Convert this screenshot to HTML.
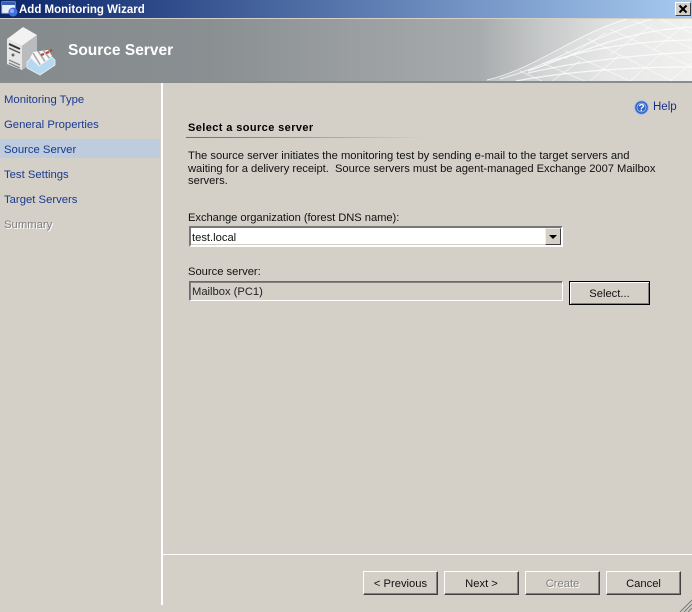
<!DOCTYPE html>
<html><head><meta charset="utf-8">
<style>
html,body{margin:0;padding:0}
body{width:692px;height:612px;overflow:hidden;position:relative;background:#d4d0c8;font-family:"Liberation Sans",sans-serif;font-size:11.2px;color:#000}
.a{position:absolute;white-space:nowrap}
.n{left:4px;color:#1a3a8c;height:14px;line-height:14px;font-size:11.3px}
.t{left:188px;height:14px;line-height:14px;color:#111}
.b{position:absolute;box-sizing:border-box;background:#d4d0c8;border:1px solid;border-color:#fff #404040 #404040 #fff;box-shadow:inset -1px -1px 0 #808080;text-align:center;line-height:24px;height:24px;width:75px;top:571px;color:#111}
</style></head><body>
<div class="a" style="left:0;top:0;width:692px;height:18px;background:linear-gradient(90deg,#0a246a,#a6caf0)"></div>
<svg class="a" style="left:1px;top:1px" width="18" height="16" viewBox="0 0 18 16"><rect x="1" y="1" width="13" height="11" fill="#e8eef8" stroke="#c4d2e8"/><rect x="1" y="1" width="13" height="3" fill="#3a5fb0"/><circle cx="12" cy="11" r="4.5" fill="#3f6fe0"/><circle cx="11" cy="10" r="2" fill="#8fb0f5"/></svg>
<div class="a" style="left:19px;top:3px;color:#fff;font-weight:bold;font-size:11.5px;line-height:14px">Add Monitoring Wizard</div>
<div class="a" style="left:675px;top:2px;box-sizing:border-box;width:16px;height:14px;background:#d4d0c8;border:1px solid;border-color:#fff #404040 #404040 #fff"><svg style="position:absolute;left:2px;top:1px" width="10" height="10" viewBox="0 0 10 10"><path d="M1.5 1.5L8.5 8.5M8.5 1.5L1.5 8.5" stroke="#000" stroke-width="2"/></svg></div>

<div class="a" style="left:0;top:18px;width:692px;height:1px;background:#d4d0c8"></div>
<div class="a" style="left:0;top:19px;width:692px;height:62px;background:linear-gradient(90deg,#858a8d 0,#8a8f92 30%,#a8abad 69%,#c8cacb 79%,#e0e1e0 88%,#ececea 100%)"></div>
<svg class="a" style="left:480px;top:19px" width="212" height="62" viewBox="0 0 212 62" fill="none" stroke="#fff" stroke-opacity=".75">
<path d="M5 62C60 50 95 15 147 0H212V62Z" fill="#fff" fill-opacity=".22" stroke="none"/>
<path d="M7 61C55 50 95 15 147 0" stroke-width="1"/>
<path d="M20 60C75 45 110 18 172 0" stroke-width="1"/>
<path d="M48 52C90 38 140 12 212 8" stroke-width="1.3"/>
<path d="M65 44C100 32 150 22 212 21" stroke-width="1.3"/>
<path d="M48 54C100 42 155 36 212 33" stroke-width="1.3"/>
<path d="M36 62C90 52 150 48 212 48" stroke-width="1.3"/>
<path d="M40 52L62 62M62 44L105 62M85 32L150 62M108 20L192 62M130 10L212 48M155 2L212 30M180 0L212 14" stroke-opacity=".55"/>
<path d="M72 62L100 42M110 62L140 36M150 62L182 34M190 62L212 44M85 40L125 14M130 36L172 6M172 32L208 4" stroke-opacity=".55"/>
</svg>
<div class="a" style="left:0;top:81px;width:692px;height:2px;background:#888d8f"></div>

<svg class="a" style="left:0;top:22px" width="60" height="58" viewBox="0 0 60 58">
<path d="M7 17L23 5 37 13 22 24Z" fill="#f2f2f2"/>
<path d="M7 17L22 24V48L7 42Z" fill="#e6e6e6"/>
<path d="M22 24L37 13V38L22 48Z" fill="#b9bbbc"/>
<path d="M9 22L20 27" stroke="#333" stroke-width="2"/>
<path d="M9 26L20 31" stroke="#555" stroke-width="1.5"/>
<circle cx="13" cy="33" r="1.5" fill="#666"/>
<path d="M9 38L20 43M9 41L20 46" stroke="#888" stroke-width="1.5"/>
<path d="M30 36L33 30 48 28 52 34 38 46Z" fill="#f8f8f8"/>
<path d="M33 31L41 44M38 29L46 41M43 28L50 37" stroke="#aaa" stroke-width="1.6"/>
<path d="M41 33l3-1M46 31l3-1M50 29l2-1" stroke="#c0392b" stroke-width="2"/>
<path d="M27 40L31 36 39 44 52 35 55 38 55 43 40 53 27 46Z" fill="#b7d9f0" stroke="#e9f1f6" stroke-width=".8"/>
</svg>
<div class="a" style="left:68px;top:42px;color:#fff;font-weight:bold;font-size:15.5px;line-height:18px">Source Server</div>

<div class="a" style="left:0;top:139px;width:160px;height:19px;background:#bfccdd"></div>
<div class="a n" style="top:93px">Monitoring Type</div>
<div class="a n" style="top:118px">General Properties</div>
<div class="a n" style="top:143px">Source Server</div>
<div class="a n" style="top:168px">Test Settings</div>
<div class="a n" style="top:193px">Target Servers</div>
<div class="a n" style="top:218px;color:#808080;text-shadow:1px 1px 0 #fff">Summary</div>
<div class="a" style="left:161px;top:83px;width:2px;height:522px;background:#fff"></div>
<div class="a" style="left:163px;top:554px;width:529px;height:1px;background:#fff"></div>

<svg class="a" style="left:634px;top:100px" width="15" height="15" viewBox="0 0 15 15"><circle cx="7.5" cy="7.5" r="6.8" fill="#2f62c4" stroke="#9db9e8"/><circle cx="7.5" cy="7.5" r="4.4" fill="none" stroke="#fff" stroke-opacity=".5"/><text x="7.5" y="11" font-family="Liberation Sans" font-size="10" font-weight="bold" fill="#fff" text-anchor="middle">?</text></svg>
<div class="a" style="left:653px;top:100px;height:14px;line-height:14px;color:#1a2f8c;font-size:11.5px">Help</div>

<div class="a t" style="top:121px;font-weight:bold;font-size:11px;color:#000;letter-spacing:.4px">Select a source server</div>
<div class="a" style="left:186px;top:137px;width:240px;height:1px;background:linear-gradient(90deg,#6a6a6a,#d4d0c8)"></div>
<div class="a t" style="top:149px">The source server initiates the monitoring test by sending e-mail to the target servers and</div>
<div class="a t" style="top:162px;letter-spacing:-.03px">waiting for a delivery receipt.&nbsp; Source servers must be agent-managed Exchange 2007 Mailbox</div>
<div class="a t" style="top:174px">servers.</div>
<div class="a t" style="top:211px;letter-spacing:-.05px">Exchange organization (forest DNS name):</div>

<div class="a" style="left:189px;top:226px;box-sizing:border-box;width:374px;height:21px;background:#fff;border:2px solid;border-color:#777 #fff #fff #777;box-shadow:inset -1px -1px 0 #d4d0c8"></div>
<div class="a" style="left:192px;top:231px;height:14px;line-height:14px;color:#111">test.local</div>
<div class="a" style="left:545px;top:228px;box-sizing:border-box;width:16px;height:17px;background:#d4d0c8;border:1px solid;border-color:#eee #404040 #404040 #eee"></div>
<div class="a" style="left:549px;top:235px;width:0;height:0;border:4px solid transparent;border-top:4px solid #000;border-bottom:0"></div>

<div class="a t" style="top:265px">Source server:</div>
<div class="a" style="left:189px;top:281px;box-sizing:border-box;width:374px;height:20px;background:#d4d0c8;border:1px solid;border-color:#6b6b6b #fff #fff #6b6b6b;box-shadow:inset 1px 1px 0 #808080"></div>
<div class="a" style="left:192px;top:285px;height:14px;line-height:14px;color:#222">Mailbox (PC1)</div>
<div class="b" style="left:569px;top:281px;width:81px;height:24px;border:1px solid #000;box-shadow:inset 1px 1px 0 #fff,inset -1px -1px 0 #808080">Select...</div>

<div class="b" style="left:363px">&lt; Previous</div>
<div class="b" style="left:444px">Next &gt;</div>
<div class="b" style="left:525px;color:#808080;text-shadow:1px 1px 0 #fff">Create</div>
<div class="b" style="left:606px">Cancel</div>
<svg class="a" style="left:679px;top:599px" width="13" height="13" viewBox="0 0 13 13" fill="none" stroke="#777"><path d="M1 13L13 1M5 13L13 5M9 13L13 9"/></svg>
</body></html>
